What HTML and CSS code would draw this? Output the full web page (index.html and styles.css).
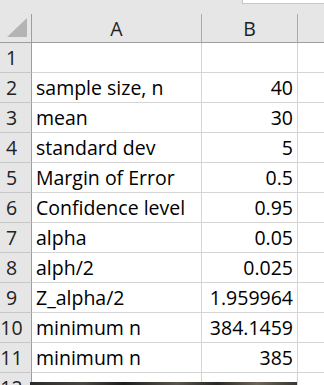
FILE: index.html
```html
<!DOCTYPE html>
<html>
<head>
<meta charset="utf-8">
<link rel="stylesheet" href="styles.css">
</head>
<body>
<div class="app">
  <div class="topbar"><div class="namebox"></div></div>
  <div class="sheet">
    <div class="corner"><span class="tri"></span></div>
    <div class="colhead">A</div>
    <div class="colhead">B</div>
    <div class="colhead last"></div>

    <div class="rowhead">1</div><div class="cell"></div><div class="cell num"></div><div class="cell last"></div>
    <div class="rowhead">2</div><div class="cell">sample size, n</div><div class="cell num">40</div><div class="cell last"></div>
    <div class="rowhead">3</div><div class="cell">mean</div><div class="cell num">30</div><div class="cell last"></div>
    <div class="rowhead">4</div><div class="cell">standard dev</div><div class="cell num">5</div><div class="cell last"></div>
    <div class="rowhead">5</div><div class="cell">Margin of Error</div><div class="cell num">0.5</div><div class="cell last"></div>
    <div class="rowhead">6</div><div class="cell">Confidence level</div><div class="cell num">0.95</div><div class="cell last"></div>
    <div class="rowhead">7</div><div class="cell">alpha</div><div class="cell num">0.05</div><div class="cell last"></div>
    <div class="rowhead">8</div><div class="cell">alph/2</div><div class="cell num">0.025</div><div class="cell last"></div>
    <div class="rowhead">9</div><div class="cell">Z_alpha/2</div><div class="cell num">1.959964</div><div class="cell last"></div>
    <div class="rowhead">10</div><div class="cell">minimum n</div><div class="cell num">384.1459</div><div class="cell last"></div>
    <div class="rowhead">11</div><div class="cell">minimum n</div><div class="cell num">385</div><div class="cell last"></div>
    <div class="rowhead">12</div><div class="cell"></div><div class="cell num"></div><div class="cell last"></div>
  </div>
  <div class="photo-edge"></div>
</div>
</body>
</html>
```

FILE: styles.css
```css
* { box-sizing: border-box; }
html, body { margin: 0; padding: 0; }
body {
  width: 324px;
  height: 385px;
  overflow: hidden;
  background: #ffffff;
  font-family: "Open Sans", "Liberation Sans", sans-serif;
  font-size: 19.5px;
  color: #000;
}
.app {
  position: relative;
  width: 324px;
  height: 385px;
  overflow: hidden;
}
.topbar {
  height: 14px;
  background: #e6e6e6;
  display: flex;
  justify-content: flex-end;
}
.namebox {
  width: 82px;
  height: 4px;
  background: #ffffff;
  border-left: 1px solid #c6c6c6;
  border-bottom: 1px solid #c6c6c6;
}
.sheet {
  display: grid;
  grid-template-columns: 32px 170px 96px 1fr;
  grid-auto-rows: 30px;
  grid-template-rows: 29px;
}
.corner {
  background: #e6e6e6;
  border-right: 1px solid #9e9e9e;
  border-bottom: 1px solid #9e9e9e;
  position: relative;
}
.tri {
  position: absolute;
  left: 7px;
  top: 4px;
  width: 0;
  height: 0;
  border-left: 20px solid transparent;
  border-bottom: 19px solid #b4b4b4;
}
.colhead {
  background: #e6e6e6;
  border-right: 1px solid #ababab;
  border-bottom: 1px solid #9e9e9e;
  text-align: center;
  line-height: 28px;
  padding-top: 1px;
  color: #222;
}
.colhead.last { border-right: none; }
.rowhead {
  background: #e6e6e6;
  border-right: 1px solid #9e9e9e;
  border-bottom: 1px solid #c8c8c8;
  text-align: center;
  padding-right: 8px;
  line-height: 28px;
  padding-top: 1px;
  color: #222;
}
.cell {
  border-right: 1px solid #d4d4d4;
  border-bottom: 1px solid #d4d4d4;
  line-height: 28px;
  padding-top: 1px;
  padding-left: 4px;
  white-space: nowrap;
  overflow: hidden;
}
.cell.num {
  text-align: right;
  padding-left: 0;
  padding-right: 4px;
}
.cell.last { border-right: none; }
.photo-edge {
  position: absolute;
  left: 30px;
  width: 267px;
  bottom: 0;
  height: 3px;
  background: linear-gradient(90deg, #2b2a28 0%, #4a4640 20%, #1f1e1c 35%, #5a554c 55%, #2a2824 70%, #6d6556 85%, #3a3732 100%);
}
```
